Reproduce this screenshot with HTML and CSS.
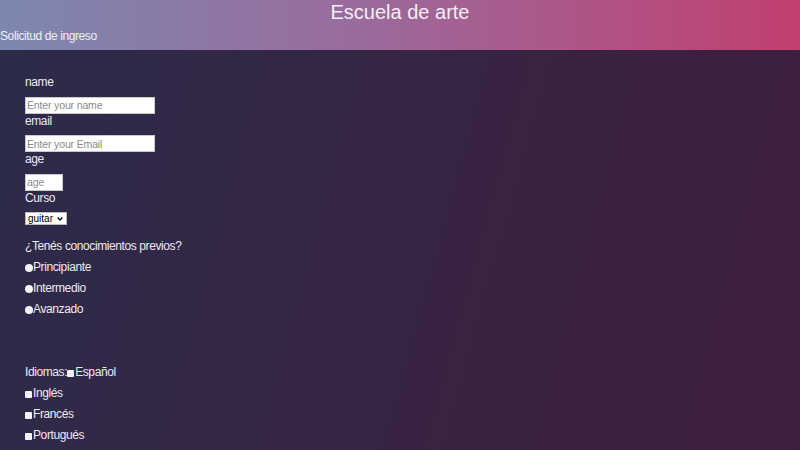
FILE: index.html
```html
<!DOCTYPE html>
<html lang="es">
<head>
<meta charset="utf-8">
<title>Escuela de arte</title>
<link rel="stylesheet" href="styles.css">
</head>
<body>
<header class="top">
  <h1 class="title">Escuela de arte</h1>
  <p class="subtitle">Solicitud de ingreso</p>
</header>
<main class="panel">
  <form class="form">
    <label class="lbl" for="name">name</label>
    <input class="field" id="name" type="text" placeholder="Enter your name">
    <label class="lbl" for="email">email</label>
    <input class="field" id="email" type="email" placeholder="Enter your Email">
    <label class="lbl" for="age">age</label>
    <input class="field field-age" id="age" type="text" placeholder="age">
    <label class="lbl" for="curso">Curso</label>
    <span class="sel-wrap">
      <select class="sel" id="curso"><option>guitar</option></select>
      <svg class="chev" width="6" height="4" viewBox="0 0 6 4"><path d="M0.6 0.6 L3 3 L5.4 0.6" fill="none" stroke="#111" stroke-width="1.4"/></svg>
    </span>
    <div class="rows">
      <div class="row">¿Tenés conocimientos previos?</div>
      <div class="row"><input class="radio" type="radio" name="lvl">Principiante</div>
      <div class="row"><input class="radio" type="radio" name="lvl">Intermedio</div>
      <div class="row"><input class="radio" type="radio" name="lvl">Avanzado</div>
      <div class="row"></div>
      <div class="row"></div>
      <div class="row">Idiomas:<input class="check" type="checkbox">Español</div>
      <div class="row"><input class="check" type="checkbox">Inglés</div>
      <div class="row"><input class="check" type="checkbox">Francés</div>
      <div class="row"><input class="check" type="checkbox">Portugués</div>
    </div>
  </form>
</main>
</body>
</html>
```
FILE: styles.css
```css
html, body {
  margin: 0;
  padding: 0;
}
body {
  font-family: "Liberation Sans", Arial, sans-serif;
  font-size: 12px;
  letter-spacing: -0.4px;
  color: #eeeaf2;
  background: #2e2a48;
  height: 450px;
  overflow: hidden;
}
.top {
  height: 50px;
  background: linear-gradient(to right, #7c88b0 0%, #9a6b9c 45%, #c13f70 100%);
  color: #f4eef4;
}
.title {
  margin: 0;
  height: 24px;
  line-height: 24px;
  font-size: 20px;
  letter-spacing: 0;
  font-weight: normal;
  text-align: center;
}
.subtitle {
  margin: 4px 0 0;
  line-height: 16px;
  font-size: 12px;
}
.panel {
  height: 400px;
  border-radius: 3px 3px 0 0;
  background: linear-gradient(105deg, #2c2b4a 0%, #362543 45%, #3e1e3d 100%);
  padding: 25px 25px 0;
  box-sizing: border-box;
}
.form {
  display: flex;
  flex-direction: column;
  align-items: flex-start;
}
.lbl {
  display: block;
  line-height: 15px;
  margin-bottom: 6.5px;
}
.field {
  box-sizing: border-box;
  width: 130px;
  height: 17px;
  margin: 0;
  padding: 0 1px;
  border: 1px solid #c8c8d0;
  background: #fff;
  font-family: "Liberation Sans", Arial, sans-serif;
  font-size: 10.5px;
  letter-spacing: -0.15px;
  color: #333;
}
.field::placeholder {
  color: #8a8a8a;
}
.field-age {
  width: 38px;
}
.sel-wrap {
  position: relative;
  display: block;
  width: 42px;
  height: 13px;
}
.sel {
  -webkit-appearance: none;
  appearance: none;
  box-sizing: border-box;
  display: block;
  height: 13px;
  width: 42px;
  margin: 0;
  padding: 0 10px 0 2px;
  border: 1px solid #bbb;
  border-radius: 0;
  background: #fff;
  font-family: "Liberation Sans", Arial, sans-serif;
  font-size: 10px;
  letter-spacing: 0;
  line-height: 11px;
  color: #000;
}
.chev {
  position: absolute;
  right: 4px;
  top: 5px;
  pointer-events: none;
}
.rows {
  margin-top: 11px;
  display: flex;
  flex-direction: column;
}
.row {
  height: 21px;
  line-height: 21px;
  display: flex;
  align-items: center;
}
.radio, .check {
  -webkit-appearance: none;
  appearance: none;
  width: 8px;
  height: 8px;
  margin: 1px 0 0;
  padding: 0;
  border: none;
  background: #f4f2f6;
  flex: none;
}
.radio {
  border-radius: 50%;
}
.check {
  width: 7px;
  height: 7px;
  margin-right: 1px;
  border-radius: 1px;
}
```
